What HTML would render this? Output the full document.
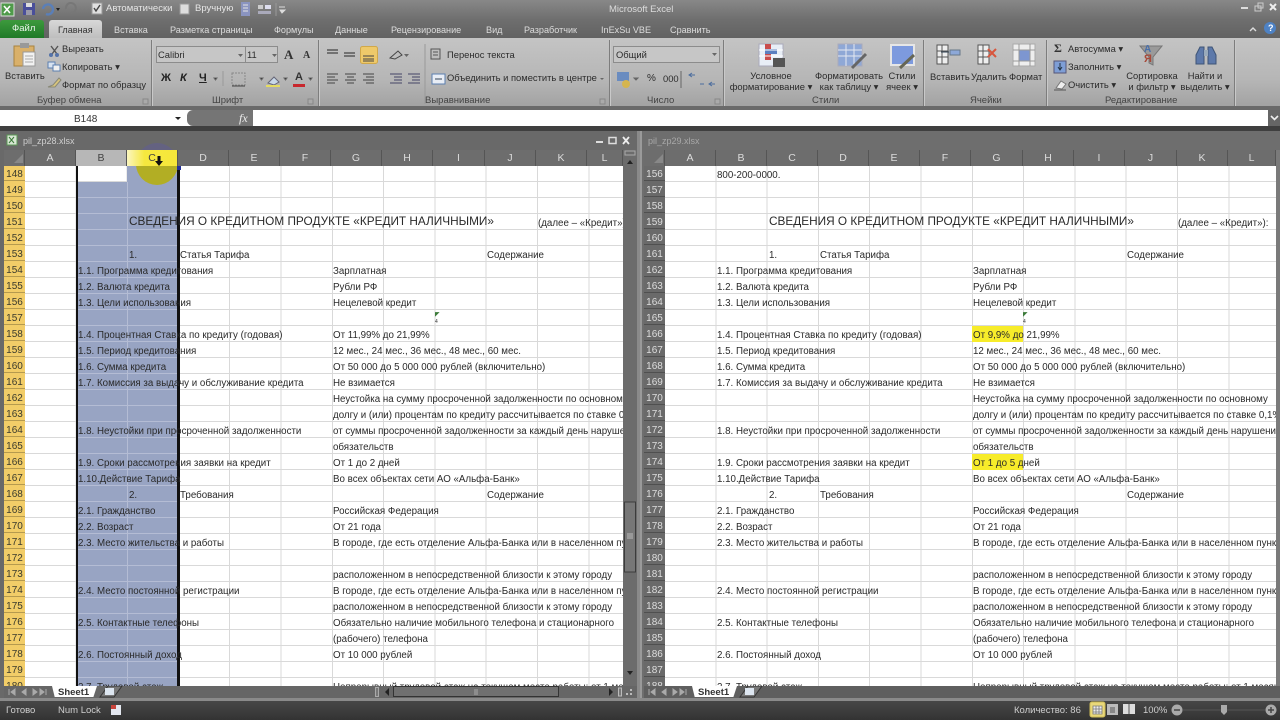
<!DOCTYPE html>
<html><head><meta charset="utf-8"><style>
html,body{margin:0;padding:0}
body{width:1280px;height:720px;overflow:hidden;position:relative;background:#5f5f5f;font-family:"Liberation Sans",sans-serif;font-size:9.5px;color:#2e2e2e}
.a{position:absolute;white-space:nowrap}
.tab{position:absolute;top:24px;white-space:nowrap;color:#dcdcdc;font-size:9.1px;line-height:12px}
.sep{position:absolute;top:40px;width:1px;height:66px;background:#7d7d7d;box-shadow:1px 0 0 #c9c9c9}
.lab{position:absolute;top:95px;color:#444;font-size:9.5px;line-height:12px;white-space:nowrap}
.rb{position:absolute;white-space:nowrap;color:#2c2c2c;font-size:9.4px;line-height:12px}
.c{text-align:center}
.pane{position:absolute;top:166px;height:520px;overflow:hidden;background-color:#fff}
.grid{position:absolute;left:0;top:0;right:0;bottom:0;
background-image:repeating-linear-gradient(to bottom,transparent 0,transparent 15px,#d9d9d9 15px,#d9d9d9 16px),repeating-linear-gradient(to right,transparent 0,transparent 50.3px,#d9d9d9 50.3px,#d9d9d9 51.3px)}
.pane b{position:absolute;font-weight:normal;white-space:nowrap;font-size:9.75px;line-height:16px;margin-top:2px;color:#2a2a2a}
.pane b.ttl{font-size:11.8px;margin-top:-1px}
.rh{position:absolute;top:166px;width:20px;height:520px;overflow:hidden;text-align:center;font-size:10px;line-height:16px;padding-top:1px;box-sizing:border-box;
background-image:repeating-linear-gradient(to bottom,transparent 0,transparent 14px,rgba(0,0,0,.25) 14px,rgba(0,0,0,.25) 15px,transparent 15px,transparent 16px)}
.ch{position:absolute;top:150px;height:16px;text-align:center;font-size:10.5px;line-height:17px;color:#dcdcdc;background:#6d6d6d;border-right:1px solid #555;box-sizing:border-box}
</style></head><body>

<!-- title bar -->
<div class="a" style="left:0;top:0;width:1280px;height:19px;background:linear-gradient(#888,#6f6f6f)"></div>
<div class="a" style="left:0;top:19px;width:1280px;height:19px;background:linear-gradient(#6f6f6f,#626262)"></div>
<svg class="a" style="left:0;top:0" width="300" height="19" viewBox="0 0 300 19">
<rect x="1" y="3" width="13" height="13" fill="#4f9b4a" stroke="#ddd"/><path d="M4 6l6 7M10 6l-6 7" stroke="#fff" stroke-width="1.6"/>
<rect x="23" y="3" width="12" height="12" fill="#4a4f9a"/><rect x="26" y="3" width="6" height="4" fill="#ddd"/><rect x="26" y="10" width="6" height="5" fill="#99a"/>
<path d="M43 9a5 5 0 1 1 3 5" fill="none" stroke="#5a7fb8" stroke-width="2.4"/><path d="M56 8l4 0-2 3z" fill="#222"/>
<path d="M66 9a5 5 0 1 1 5 4" fill="none" stroke="#777" stroke-width="2"/>
<rect x="92" y="3" width="10" height="11" fill="#e0e0e0" stroke="#999"/><path d="M94 8l2 3 4-6" stroke="#444" fill="none" stroke-width="1.4"/>
<rect x="180" y="4" width="9" height="10" fill="#ddd" stroke="#999"/>
<rect x="241" y="2" width="9" height="14" fill="#8a94c0"/><path d="M243 5h5M243 8h5M243 11h5" stroke="#e4e4e4"/>
<rect x="258" y="5" width="5" height="4" fill="#ccc"/><rect x="265" y="5" width="6" height="4" fill="#dde"/><rect x="258" y="11" width="13" height="3" fill="#aab"/>
<path d="M276 3v13" stroke="#999"/><path d="M279 7h6M280 10l2 3 3-3z" stroke="#ddd" fill="#ddd"/>
</svg>
<div class="a" style="left:106px;top:3px;font-size:9.5px;color:#e6e6e6;line-height:12px">Автоматически</div>
<div class="a" style="left:195px;top:3px;font-size:9.5px;color:#e6e6e6;line-height:12px">Вручную</div>
<div class="a" style="left:609px;top:4px;font-size:9.5px;color:#dcdcdc;line-height:12px">Microsoft Excel</div>
<svg class="a" style="left:1236px;top:0" width="44" height="38" viewBox="0 0 44 38">
<path d="M5 8h7" stroke="#ddd" stroke-width="2"/><rect x="19" y="6" width="6" height="5" fill="none" stroke="#ccc"/><rect x="22" y="3" width="5" height="5" fill="none" stroke="#ccc"/>
<path d="M34 4l6 6M40 4l-6 6" stroke="#eee" stroke-width="2"/>
<path d="M14 31l3-3 3 3" stroke="#ddd" fill="none" stroke-width="1.4"/><circle cx="34" cy="28" r="6" fill="#4e82c4"/></svg>
<div class="a" style="left:1268px;top:23px;font-size:9px;color:#fff;font-weight:bold;line-height:10px">?</div>

<!-- tabs -->
<div class="a" style="left:0;top:20px;width:44px;height:18px;background:linear-gradient(#3d9a3d,#1f7a28);border-radius:3px 3px 0 0"></div>
<div class="a" style="left:12px;top:23px;color:#eaf4ea;font-size:9.5px;line-height:12px">Файл</div>
<div class="a" style="left:49px;top:20px;width:53px;height:19px;background:linear-gradient(#d8d8d8,#bdbdbd);border-radius:3px 3px 0 0"></div>
<div class="tab" style="left:58px;color:#333">Главная</div>
<div class="tab" style="left:114px">Вставка</div>
<div class="tab" style="left:170px">Разметка страницы</div>
<div class="tab" style="left:274px">Формулы</div>
<div class="tab" style="left:335px">Данные</div>
<div class="tab" style="left:391px">Рецензирование</div>
<div class="tab" style="left:486px">Вид</div>
<div class="tab" style="left:524px">Разработчик</div>
<div class="tab" style="left:601px">InExSu VBE</div>
<div class="tab" style="left:670px">Сравнить</div>

<!-- ribbon -->
<div class="a" style="left:0;top:38px;width:1280px;height:69px;background:linear-gradient(#c4c4c4,#b6b6b6 60%,#a2a2a2)"></div>
<div class="a" style="left:0;top:106px;width:1280px;height:4px;background:#6a6a6a"></div>
<div class="sep" style="left:151px"></div><div class="sep" style="left:318px"></div><div class="sep" style="left:609px"></div><div class="sep" style="left:723px"></div><div class="sep" style="left:923px"></div><div class="sep" style="left:1046px"></div><div class="sep" style="left:1234px"></div>
<div class="lab" style="left:37px">Буфер обмена</div><div class="lab" style="left:212px">Шрифт</div><div class="lab" style="left:425px">Выравнивание</div><div class="lab" style="left:647px">Число</div><div class="lab" style="left:812px">Стили</div><div class="lab" style="left:970px">Ячейки</div><div class="lab" style="left:1105px">Редактирование</div>

<svg class="a" style="left:0;top:38px" width="1280" height="68" viewBox="0 38 1280 68">
<!-- paste -->
<rect x="14" y="46" width="20" height="20" fill="#d9b06a" stroke="#a8823f"/><rect x="20" y="43" width="9" height="5" fill="#999"/><rect x="23" y="52" width="12" height="14" fill="#f2f2f2" stroke="#999"/><path d="M25 56h8M25 59h8M25 62h8" stroke="#aaa"/>
<path d="M51 46l6 8M58 46l-6 8" stroke="#555" stroke-width="1.4"/><circle cx="51" cy="55" r="2" fill="#5573a8"/><circle cx="57" cy="55" r="2" fill="#5573a8"/>
<rect x="48" y="62" width="7" height="6" fill="#d7e2ef" stroke="#5b7fb0"/><rect x="53" y="65" width="7" height="6" fill="#f0f0f0" stroke="#5b7fb0"/>
<path d="M48 87l5-2 6-7 2 2-6 7z" fill="#d8c47c" stroke="#887"/>
<!-- font box -->
<rect x="156.500" y="46.500" width="89" height="16" fill="#c6c6c6" stroke="#8c8c8c"/><rect x="245.500" y="46.500" width="32" height="16" fill="#c6c6c6" stroke="#8c8c8c"/>
<path d="M238 54h5l-2.500 3zM272 54h5l-2.500 3z" fill="#666"/>
<path d="M214 78l3 0-1.500 2zM260 78l3 0-1.500 2zM284 78l3 0-1.500 2zM309 78l3 0-1.500 2z" stroke="#666"/>
<rect x="232" y="73" width="13" height="12" fill="none" stroke="#888" stroke-dasharray="2 1"/><path d="M232 86h13" stroke="#444"/><path d="M223 71v15" stroke="#999"/>
<path d="M268 83l6-6 5 5-5 3z" fill="#c8d8e8" stroke="#667"/><path d="M266 86h14" stroke="#e6dd60" stroke-width="2"/>
<!-- align -->
<path d="M327 50h11M327 53h11M344 53h11M344 56h11" stroke="#444" stroke-width="1.3"/>
<rect x="360.500" y="46.500" width="17" height="17" rx="2" fill="#eec96a" stroke="#d0a84a"/><path d="M363 56h11M363 59h11M363 61h11" stroke="#444"/>
<path d="M327 74h11M327 77h8M327 80h11M327 83h8M345 74h11M347 77h7M345 80h11M347 83h7M363 74h11M366 77h8M363 80h11M366 83h8" stroke="#444"/>
<path d="M390 58l8-7 4 4-7 4z" fill="none" stroke="#444"/><path d="M404 54h5l-2.500 3z" fill="#666"/>
<path d="M390 74h12M394 77h8M394 80h8M390 83h12M408 74h12M412 77h8M412 80h8M408 83h12" stroke="#446"/>
<path d="M425 44v60" stroke="#999"/>
<rect x="431" y="49" width="9" height="10" fill="none" stroke="#555"/><path d="M433 52h5M433 55h5" stroke="#555"/>
<rect x="432" y="74" width="13" height="10" fill="#e8edf5" stroke="#5b7fb0"/><path d="M435 79h7" stroke="#345"/>
<path d="M600 78h4l-2 2z" fill="#666"/>
<!-- number -->
<rect x="613.500" y="46.500" width="106" height="16" fill="#c6c6c6" stroke="#8c8c8c"/><path d="M712 53h5l-2.500 3z" fill="#666"/>
<rect x="617" y="72" width="12" height="9" fill="#6a8cc0"/><circle cx="626" cy="84" r="4" fill="#d5b54e"/>
<path d="M634 78h4l-2 2zM681 71v17" stroke="#666" fill="#666"/>
<path d="M690 75h5M692 73l-3 2 3 2M704 84h-4" stroke="#4a6c9e" fill="none"/><path d="M710 84h5M712 82l-3 2 3 2" stroke="#4a6c9e" fill="none"/>
<!-- styles icons -->
<rect x="759" y="44" width="24" height="22" fill="#e8eef6" stroke="#aab"/><rect x="765" y="44" width="6" height="5" fill="#c94c4c"/><rect x="765" y="49" width="12" height="5" fill="#5b7fc0"/><rect x="765" y="54" width="6" height="6" fill="#c94c4c"/><rect x="773" y="58" width="12" height="9" fill="#555"/><path d="M759 50h24M759 56h24" stroke="#fff"/>
<rect x="838" y="44" width="24" height="22" fill="#8fa8d6" stroke="#aab"/><path d="M838 50h24M838 56h24M846 44v22M854 44v22" stroke="#e4e8f0"/><path d="M852 68l14-14" stroke="#666" stroke-width="3"/>
<rect x="891" y="45" width="23" height="20" fill="#7d9ade" stroke="#e6e6e6" stroke-width="2"/><path d="M900 68l14-13" stroke="#665" stroke-width="3"/>
<!-- cells -->
<path d="M937 45h11v19h-11zM937 51h11M937 57h11M942 45v19" fill="#eee" stroke="#555"/><rect x="950" y="50" width="10" height="5" fill="#8da8d8" stroke="#678"/><path d="M941 52h8" stroke="#345"/>
<path d="M978 45h11v19h-11zM978 51h11M978 57h11M983 45v19" fill="#eee" stroke="#555"/><path d="M988 49l8 8M996 49l-8 8" stroke="#d8563d" stroke-width="2"/>
<rect x="1013" y="44" width="22" height="22" fill="#eee" stroke="#aaa"/><rect x="1019" y="50" width="11" height="11" fill="#7d96d0"/><path d="M1013 50h22M1013 61h22M1019 44v22M1030 44v22" stroke="#999"/>
<!-- editing -->
<rect x="1054" y="61" width="12" height="12" fill="#7e9ed6" stroke="#557"/><path d="M1060 63v6M1058 67l2 3 2-3" stroke="#234" fill="none"/>
<path d="M1056 88l5-7 5 3-4 5z" fill="#eee" stroke="#777"/><path d="M1054 90h12" stroke="#555"/>
<path d="M1140 46h22l-9 11v8l-4-2v-6z" fill="#9a9a9a" stroke="#777"/>
<path d="M1196 64v-9l4-8h4v17zM1208 64v-17h4l4 8v9z" fill="#5d79aa" stroke="#3e5476"/>
<path d="M1204 50h4v6h-4z" fill="#9ab"/>
<!-- expanders -->
<path d="M143 99h5v5h-5zM308 99h5v5h-5zM600 99h5v5h-5zM715 99h5v5h-5z" fill="#aaa" stroke="#888"/>
</svg>
<div class="rb" style="left:5px;top:70px">Вставить</div>
<div class="rb" style="left:62px;top:43px">Вырезать</div>
<div class="rb" style="left:62px;top:61px">Копировать ▾</div>
<div class="rb" style="left:62px;top:79px">Формат по образцу</div>
<div class="rb" style="left:158px;top:49px">Calibri</div>
<div class="rb" style="left:247px;top:49px">11</div>
<div class="a" style="left:284px;top:47px;font-family:'Liberation Serif',serif;font-size:13px;color:#333;font-weight:bold;line-height:15px">A</div>
<div class="a" style="left:303px;top:49px;font-family:'Liberation Serif',serif;font-size:10px;color:#333;font-weight:bold;line-height:13px">A</div>
<div class="a" style="left:161px;top:72px;font-weight:bold;font-size:11px;color:#222;line-height:13px">Ж</div>
<div class="a" style="left:180px;top:72px;font-style:italic;font-weight:bold;font-size:11px;color:#222;line-height:13px">К</div>
<div class="a" style="left:199px;top:72px;font-weight:bold;text-decoration:underline;font-size:11px;color:#222;line-height:13px">Ч</div>
<div class="a" style="left:293px;top:71px;font-weight:bold;font-size:11px;color:#333;line-height:13px;border-bottom:3px solid #c8272d;width:12px;text-align:center">A</div>
<div class="rb" style="left:447px;top:49px">Перенос текста</div>
<div class="rb" style="left:447px;top:72px">Объединить и поместить в центре</div>
<div class="rb" style="left:616px;top:49px">Общий</div>
<div class="rb" style="left:647px;top:73px;font-size:10px">%</div>
<div class="rb" style="left:663px;top:73px">000</div>
<div class="rb c" style="left:716px;top:71px;width:110px;line-height:10.5px">Условное<br>форматирование ▾</div>
<div class="rb c" style="left:814px;top:71px;width:70px;line-height:10.5px">Форматировать<br>как таблицу ▾</div>
<div class="rb c" style="left:886px;top:71px;width:32px;line-height:10.5px">Стили<br>ячеек ▾</div>
<div class="rb" style="left:930px;top:71px">Вставить</div>
<div class="rb" style="left:971px;top:71px">Удалить</div>
<div class="rb" style="left:1009px;top:71px">Формат</div>
<div class="a" style="left:1054px;top:41px;font-family:'Liberation Serif',serif;font-weight:bold;font-size:12px;color:#333;line-height:14px">Σ</div>
<div class="rb" style="left:1068px;top:43px">Автосумма ▾</div>
<div class="rb" style="left:1068px;top:61px">Заполнить ▾</div>
<div class="rb" style="left:1068px;top:79px">Очистить ▾</div>
<div class="a" style="left:1144px;top:44px;font-weight:bold;font-size:10px;color:#4a6fa8;line-height:11px">A</div>
<div class="a" style="left:1144px;top:54px;font-weight:bold;font-size:11px;color:#a84a3a;line-height:11px">Я</div>
<div class="rb c" style="left:1122px;top:71px;width:60px;line-height:10.5px">Сортировка<br>и фильтр ▾</div>
<div class="rb c" style="left:1180px;top:71px;width:50px;line-height:10.5px">Найти и<br>выделить ▾</div>

<!-- formula bar -->
<div class="a" style="left:0;top:110px;width:1280px;height:16px;background:#fff"></div>
<div class="a" style="left:74px;top:113px;font-size:10px;color:#333;line-height:13px">B148</div>
<div class="a" style="left:175px;top:117px;width:0;height:0;border:3px solid transparent;border-top:3px solid #222"></div>
<div class="a" style="left:187px;top:110px;width:66px;height:16px;background:#757575;border-radius:6px 0 0 6px"></div>
<div class="a" style="left:239px;top:111px;font-family:'Liberation Serif',serif;font-style:italic;font-size:12px;color:#eee;line-height:14px">fx</div>
<div class="a" style="left:1268px;top:110px;width:12px;height:16px;background:#666"></div>
<svg class="a" style="left:1270px;top:114px" width="9" height="8"><path d="M1 2l3.500 3.500 3.500-3.500" stroke="#eee" fill="none" stroke-width="1.600"/></svg>
<div class="a" style="left:0;top:126px;width:1280px;height:5px;background:#3f3f3f"></div>

<!-- window chrome area -->
<div class="a" style="left:0;top:131px;width:640px;height:569px;background:#696969"></div>
<div class="a" style="left:640px;top:131px;width:640px;height:569px;background:#6e6e6e"></div>
<div class="a" style="left:637px;top:131px;width:3px;height:569px;background:#8a8a8a"></div>
<div class="a" style="left:640px;top:131px;width:2px;height:569px;background:#9a9a9a"></div>

<!-- left window title -->
<svg class="a" style="left:6px;top:134px" width="12" height="12"><rect x="1" y="1" width="10" height="10" fill="#d8e6d4" stroke="#5d9a58"/><path d="M3 3l5 6M8 3l-5 6" stroke="#3a7a38"/></svg>
<div class="a" style="left:23px;top:135px;color:#cfcfcf;font-size:9px;line-height:12px">pil_zp28.xlsx</div>
<svg class="a" style="left:590px;top:134px" width="46" height="14"><path d="M6 8h7" stroke="#ddd" stroke-width="2"/><rect x="19" y="3.500" width="7" height="6" fill="none" stroke="#ddd" stroke-width="1.500"/><path d="M33 3l6 7M39 3l-6 7" stroke="#eee" stroke-width="1.800"/></svg>
<div class="a" style="left:648px;top:135px;color:#a8a8a8;font-size:9px;line-height:12px">pil_zp29.xlsx</div>

<!-- left col headers -->
<div class="ch" style="left:4px;width:21px"></div>
<svg class="a" style="left:13px;top:153px" width="11" height="11"><path d="M10 1v9h-9z" fill="#888"/></svg>
<div class="ch" style="left:25px;width:51px">A</div>
<div class="ch" style="left:76px;width:51px;background:#b7b7b7;color:#444">B</div>
<div class="ch" style="left:127px;width:51px;background:linear-gradient(90deg,#fbf6c0,#f6e83e 35%,#f6e73a);color:#444">C</div>
<div class="ch" style="left:178px;width:51px">D</div>
<div class="ch" style="left:229px;width:51px">E</div>
<div class="ch" style="left:280px;width:51px">F</div>
<div class="ch" style="left:331px;width:51px">G</div>
<div class="ch" style="left:382px;width:51px">H</div>
<div class="ch" style="left:433px;width:52px">I</div>
<div class="ch" style="left:485px;width:51px">J</div>
<div class="ch" style="left:536px;width:51px">K</div>
<div class="ch" style="left:587px;width:36px">L</div>
<div class="rh" style="left:4px;width:21px;background-color:#f2cd68;color:#3a3a2c">148<br>149<br>150<br>151<br>152<br>153<br>154<br>155<br>156<br>157<br>158<br>159<br>160<br>161<br>162<br>163<br>164<br>165<br>166<br>167<br>168<br>169<br>170<br>171<br>172<br>173<br>174<br>175<br>176<br>177<br>178<br>179<br>180</div>

<!-- left pane -->
<div class="pane" style="left:25px;width:598px">
<div class="grid"></div>
<div class="a" style="left:52px;top:16px;width:100px;height:504px;background:#98a4c3;background-image:repeating-linear-gradient(to bottom,transparent 0,transparent 15px,#b4bcd4 15px,#b4bcd4 16px),linear-gradient(to right,transparent 50px,#b4bcd4 50px,#b4bcd4 51px,transparent 51px)"></div>
<div class="a" style="left:102px;top:0;width:50px;height:16px;background:#98a4c3"></div>
<div class="a" style="left:111px;top:0;width:41px;height:21px;overflow:hidden"><div class="a" style="left:0;top:-23px;width:42px;height:42px;border-radius:50%;background:#b2ae24"></div></div>
<div class="a" style="left:51px;top:0;width:2px;height:520px;background:#111"></div>
<div class="a" style="left:152px;top:0;width:3px;height:520px;background:#111"></div>
<div class="a" style="left:152px;top:0;width:4px;height:4px;background:#22309a"></div>
<b class="ttl" style="left:104px;top:48px">СВЕДЕНИЯ О КРЕДИТНОМ ПРОДУКТЕ «КРЕДИТ НАЛИЧНЫМИ»</b>
<b style="left:513px;top:48px">(далее – «Кредит»):</b>
<b style="left:104px;top:80px">1.</b><b style="left:155px;top:80px">Статья Тарифа</b><b style="left:462px;top:80px">Содержание</b>
<b style="left:53px;top:96px">1.1. Программа кредитования</b><b style="left:308px;top:96px">Зарплатная</b>
<b style="left:53px;top:112px">1.2. Валюта кредита</b><b style="left:308px;top:112px">Рубли РФ</b>
<b style="left:53px;top:128px">1.3. Цели использования</b><b style="left:308px;top:128px">Нецелевой кредит</b>
<b style="left:410px;top:144px;font-size:6px;color:#3a7a38;margin-top:-3px">◤</b><b style="left:410px;top:148px;font-size:5px;color:#333;margin-top:0">4</b>
<b style="left:53px;top:160px">1.4. Процентная Ставка по кредиту (годовая)</b><b style="left:308px;top:160px">От 11,99% до 21,99%</b>
<b style="left:53px;top:176px">1.5. Период кредитования</b><b style="left:308px;top:176px">12 мес., 24 мес., 36 мес., 48 мес., 60 мес.</b>
<b style="left:53px;top:192px">1.6. Сумма кредита</b><b style="left:308px;top:192px">От 50 000 до 5 000 000 рублей (включительно)</b>
<b style="left:53px;top:208px">1.7. Комиссия за выдачу и обслуживание кредита</b><b style="left:308px;top:208px">Не взимается</b>
<b style="left:308px;top:224px">Неустойка на сумму просроченной задолженности по основному</b>
<b style="left:308px;top:240px">долгу и (или) процентам по кредиту рассчитывается по ставке 0,1%</b>
<b style="left:53px;top:256px">1.8. Неустойки при просроченной задолженности</b><b style="left:308px;top:256px">от суммы просроченной задолженности за каждый день нарушения</b>
<b style="left:308px;top:272px">обязательств</b>
<b style="left:53px;top:288px">1.9. Сроки рассмотрения заявки на кредит</b><b style="left:308px;top:288px">От 1 до 2 дней</b>
<b style="left:53px;top:304px">1.10.Действие Тарифа</b><b style="left:308px;top:304px">Во всех объектах сети АО «Альфа-Банк»</b>
<b style="left:104px;top:320px">2.</b><b style="left:155px;top:320px">Требования</b><b style="left:462px;top:320px">Содержание</b>
<b style="left:53px;top:336px">2.1. Гражданство</b><b style="left:308px;top:336px">Российская Федерация</b>
<b style="left:53px;top:352px">2.2. Возраст</b><b style="left:308px;top:352px">От 21 года</b>
<b style="left:53px;top:368px">2.3. Место жительства и работы</b><b style="left:308px;top:368px">В городе, где есть отделение Альфа-Банка или в населенном пункте,</b>
<b style="left:308px;top:400px">расположенном в непосредственной близости к этому городу</b>
<b style="left:53px;top:416px">2.4. Место постоянной регистрации</b><b style="left:308px;top:416px">В городе, где есть отделение Альфа-Банка или в населенном пункте,</b>
<b style="left:308px;top:432px">расположенном в непосредственной близости к этому городу</b>
<b style="left:53px;top:448px">2.5. Контактные телефоны</b><b style="left:308px;top:448px">Обязательно наличие мобильного телефона и стационарного</b>
<b style="left:308px;top:464px">(рабочего) телефона</b>
<b style="left:53px;top:480px">2.6. Постоянный доход</b><b style="left:308px;top:480px">От 10 000 рублей</b>
<b style="left:53px;top:512px">2.7. Трудовой стаж</b><b style="left:308px;top:512px">Непрерывный трудовой стаж на текущем месте работы: от 1 месяца</b>
</div>
<!-- highlight circle top (faint over title) and cursor -->
<div class="a" style="left:136px;top:143px;width:42px;height:7px;overflow:hidden"><div class="a" style="left:0;top:0;width:42px;height:42px;border-radius:50%;background:rgba(95,90,160,.45)"></div></div>
<svg class="a" style="left:154px;top:155px" width="10" height="12"><path d="M3.500 1h3v5h2.500l-4 5-4-5h2.500z" fill="#111"/></svg>

<!-- left vscroll -->
<div class="a" style="left:623px;top:150px;width:14px;height:536px;background:#6c6c6c"></div>
<svg class="a" style="left:623px;top:150px" width="14" height="536"><rect x="2" y="1" width="10" height="4" fill="none" stroke="#aaa"/><path d="M4 14h6l-3-4z" fill="#222"/><path d="M4 521h6l-3 4z" fill="#222"/><rect x="1.500" y="352" width="11" height="70" fill="#777" stroke="#3c3c3c"/><path d="M4 384h6M4 386h6M4 388h6" stroke="#bbb"/></svg>

<!-- left hscroll -->
<div class="a" style="left:4px;top:686px;width:633px;height:12px;background:#666"></div>
<svg class="a" style="left:4px;top:686px" width="48" height="12"><path d="M5 3v6M11 3l-4 3 4 3zM22 3l-4 3 4 3zM29 3l4 3-4 3zM36 3l4 3-4 3zM42 3v6" stroke="#aaa" fill="#aaa"/></svg>
<div class="a" style="left:52px;top:686px;width:45px;height:11px;background:#fff;clip-path:polygon(0 0,100% 0,92% 100%,6% 100%)"></div>
<div class="a" style="left:58px;top:687px;font-weight:bold;color:#333;font-size:9.500px;line-height:12px">Sheet1</div>
<svg class="a" style="left:96px;top:686px" width="34" height="12"><path d="M4 11l8-11h14l-8 11z" fill="#777" stroke="#333"/><rect x="9" y="2" width="9" height="7" fill="#dde6f0"/></svg>
<svg class="a" style="left:375px;top:685px" width="262" height="13"><rect x="0.500" y="2.500" width="3" height="9" fill="#777" stroke="#aaa"/><path d="M14 3v8l-4-4z" fill="#222"/><rect x="18.500" y="1.500" width="165" height="10" fill="#707070" stroke="#333"/><path d="M100 4v6M102 4v6" stroke="#aaa"/><path d="M234 3v8l4-4z" fill="#222"/><rect x="243.500" y="3" width="3" height="8" fill="#777" stroke="#bbb"/><path d="M251 9h2M255 9h2M255 5h2" stroke="#bbb" stroke-width="2"/></svg>

<!-- right col headers -->
<div class="ch" style="left:644px;width:21px"></div>
<svg class="a" style="left:653px;top:153px" width="11" height="11"><path d="M10 1v9h-9z" fill="#888"/></svg>
<div class="ch" style="left:665px;width:51px">A</div><div class="ch" style="left:716px;width:51px">B</div><div class="ch" style="left:767px;width:51px">C</div><div class="ch" style="left:818px;width:51px">D</div><div class="ch" style="left:869px;width:51px">E</div><div class="ch" style="left:920px;width:51px">F</div><div class="ch" style="left:971px;width:52px">G</div><div class="ch" style="left:1023px;width:51px">H</div><div class="ch" style="left:1074px;width:51px">I</div><div class="ch" style="left:1125px;width:52px">J</div><div class="ch" style="left:1177px;width:51px">K</div><div class="ch" style="left:1228px;width:48px">L</div>
<div class="rh" style="left:644px;width:21px;background-color:#6a6a6a;color:#dedede">156<br>157<br>158<br>159<br>160<br>161<br>162<br>163<br>164<br>165<br>166<br>167<br>168<br>169<br>170<br>171<br>172<br>173<br>174<br>175<br>176<br>177<br>178<br>179<br>180<br>181<br>182<br>183<br>184<br>185<br>186<br>187<br>188</div>

<!-- right pane -->
<div class="pane" style="left:665px;width:611px">
<div class="grid"></div>
<div class="a" style="left:307px;top:160px;width:51px;height:16px;background:#f7ec2a"></div>
<div class="a" style="left:307px;top:288px;width:51px;height:16px;background:#f7ec2a"></div>
<b style="left:52px;top:0">800-200-0000.</b>
<b class="ttl" style="left:104px;top:48px">СВЕДЕНИЯ О КРЕДИТНОМ ПРОДУКТЕ «КРЕДИТ НАЛИЧНЫМИ»</b>
<b style="left:513px;top:48px">(далее – «Кредит»):</b>
<b style="left:104px;top:80px">1.</b><b style="left:155px;top:80px">Статья Тарифа</b><b style="left:462px;top:80px">Содержание</b>
<b style="left:52px;top:96px">1.1. Программа кредитования</b><b style="left:308px;top:96px">Зарплатная</b>
<b style="left:52px;top:112px">1.2. Валюта кредита</b><b style="left:308px;top:112px">Рубли РФ</b>
<b style="left:52px;top:128px">1.3. Цели использования</b><b style="left:308px;top:128px">Нецелевой кредит</b>
<b style="left:358px;top:144px;font-size:6px;color:#3a7a38;margin-top:-3px">◤</b><b style="left:358px;top:148px;font-size:5px;color:#333;margin-top:0">4</b>
<b style="left:52px;top:160px">1.4. Процентная Ставка по кредиту (годовая)</b><b style="left:308px;top:160px">От 9,9% до 21,99%</b>
<b style="left:52px;top:176px">1.5. Период кредитования</b><b style="left:308px;top:176px">12 мес., 24 мес., 36 мес., 48 мес., 60 мес.</b>
<b style="left:52px;top:192px">1.6. Сумма кредита</b><b style="left:308px;top:192px">От 50 000 до 5 000 000 рублей (включительно)</b>
<b style="left:52px;top:208px">1.7. Комиссия за выдачу и обслуживание кредита</b><b style="left:308px;top:208px">Не взимается</b>
<b style="left:308px;top:224px">Неустойка на сумму просроченной задолженности по основному</b>
<b style="left:308px;top:240px">долгу и (или) процентам по кредиту рассчитывается по ставке 0,1%</b>
<b style="left:52px;top:256px">1.8. Неустойки при просроченной задолженности</b><b style="left:308px;top:256px">от суммы просроченной задолженности за каждый день нарушения</b>
<b style="left:308px;top:272px">обязательств</b>
<b style="left:52px;top:288px">1.9. Сроки рассмотрения заявки на кредит</b><b style="left:308px;top:288px">От 1 до 5 дней</b>
<b style="left:52px;top:304px">1.10.Действие Тарифа</b><b style="left:308px;top:304px">Во всех объектах сети АО «Альфа-Банк»</b>
<b style="left:104px;top:320px">2.</b><b style="left:155px;top:320px">Требования</b><b style="left:462px;top:320px">Содержание</b>
<b style="left:52px;top:336px">2.1. Гражданство</b><b style="left:308px;top:336px">Российская Федерация</b>
<b style="left:52px;top:352px">2.2. Возраст</b><b style="left:308px;top:352px">От 21 года</b>
<b style="left:52px;top:368px">2.3. Место жительства и работы</b><b style="left:308px;top:368px">В городе, где есть отделение Альфа-Банка или в населенном пункте,</b>
<b style="left:308px;top:400px">расположенном в непосредственной близости к этому городу</b>
<b style="left:52px;top:416px">2.4. Место постоянной регистрации</b><b style="left:308px;top:416px">В городе, где есть отделение Альфа-Банка или в населенном пункте,</b>
<b style="left:308px;top:432px">расположенном в непосредственной близости к этому городу</b>
<b style="left:52px;top:448px">2.5. Контактные телефоны</b><b style="left:308px;top:448px">Обязательно наличие мобильного телефона и стационарного</b>
<b style="left:308px;top:464px">(рабочего) телефона</b>
<b style="left:52px;top:480px">2.6. Постоянный доход</b><b style="left:308px;top:480px">От 10 000 рублей</b>
<b style="left:52px;top:512px">2.7. Трудовой стаж</b><b style="left:308px;top:512px">Непрерывный трудовой стаж на текущем месте работы: от 1 месяца</b>
</div>
<div class="a" style="left:1276px;top:150px;width:4px;height:550px;background:#7a7a7a"></div>

<!-- right tabs -->
<div class="a" style="left:644px;top:686px;width:636px;height:12px;background:#5f5f5f"></div>
<svg class="a" style="left:644px;top:686px" width="48" height="12"><path d="M5 3v6M11 3l-4 3 4 3zM22 3l-4 3 4 3zM29 3l4 3-4 3zM36 3l4 3-4 3zM42 3v6" stroke="#aaa" fill="#aaa"/></svg>
<div class="a" style="left:692px;top:686px;width:45px;height:11px;background:#fff;clip-path:polygon(0 0,100% 0,92% 100%,6% 100%)"></div>
<div class="a" style="left:698px;top:687px;font-weight:bold;color:#333;font-size:9.500px;line-height:12px">Sheet1</div>
<svg class="a" style="left:736px;top:686px" width="34" height="12"><path d="M4 11l8-11h14l-8 11z" fill="#777" stroke="#333"/><rect x="9" y="2" width="9" height="7" fill="#dde6f0"/></svg>

<!-- status bar -->
<div class="a" style="left:0;top:698px;width:1280px;height:3px;background:#8a8a8a"></div>
<div class="a" style="left:0;top:701px;width:1280px;height:19px;background:linear-gradient(#474747,#333)"></div>
<div class="a" style="left:6px;top:705px;color:#cfcfcf;font-size:9.500px;line-height:12px">Готово</div>
<div class="a" style="left:58px;top:705px;color:#cfcfcf;font-size:9.500px;line-height:12px">Num Lock</div>
<svg class="a" style="left:108px;top:702px" width="16" height="16"><rect x="3" y="3" width="10" height="10" fill="#e4e8f0"/><rect x="3" y="3" width="5" height="4" fill="#c8443c"/></svg>
<div class="a" style="left:1014px;top:705px;color:#cfcfcf;font-size:9.500px;line-height:12px">Количество: 86</div>
<svg class="a" style="left:1085px;top:700px" width="195" height="20">
<rect x="5" y="2" width="15" height="15" rx="2" fill="#e9d87a" stroke="#cdbb55"/><path d="M8 6h9v8h-9zM8 9h9M8 12h9M11 6v8M14 6v8" fill="#eee" stroke="#777" stroke-width=".8"/>
<rect x="22" y="4" width="11" height="11" fill="#bbb"/><rect x="25" y="7" width="5" height="6" fill="#888"/>
<rect x="38" y="4" width="12" height="10" fill="#ddd"/><path d="M44 4v10" stroke="#555"/>
<circle cx="92" cy="10" r="5.500" fill="#aaa"/><path d="M89 10h6" stroke="#444" stroke-width="1.500"/>
<path d="M98 10h82" stroke="#555"/><path d="M136 5h6v7l-3 3-3-3z" fill="#aaa"/>
<circle cx="186" cy="10" r="5.500" fill="#aaa"/><path d="M183 10h6M186 7v6" stroke="#444" stroke-width="1.500"/></svg>
<div class="a" style="left:1143px;top:705px;color:#cfcfcf;font-size:9.500px;line-height:12px">100%</div>
</body></html>
